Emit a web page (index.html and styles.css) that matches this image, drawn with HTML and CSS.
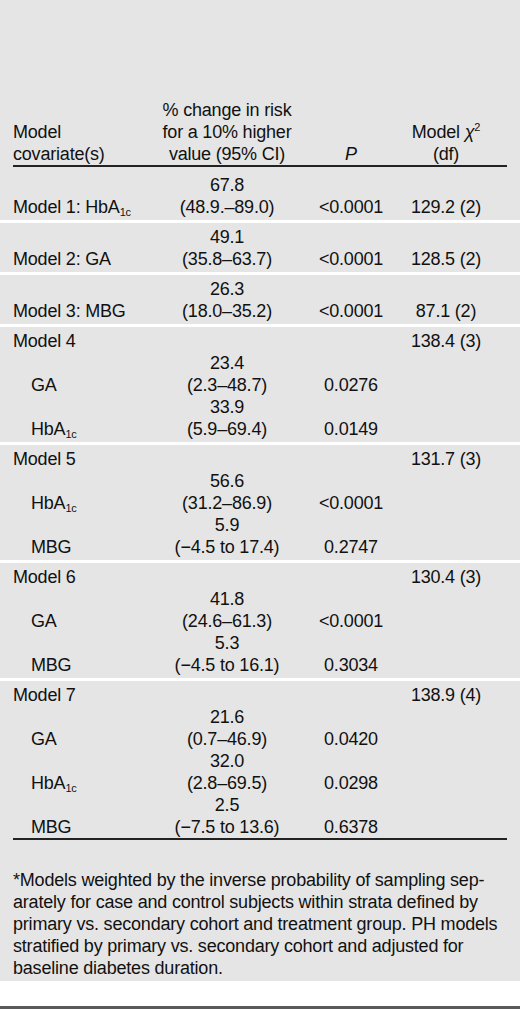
FILE: index.html
```html
<!DOCTYPE html>
<html lang="en">
<head>
  <meta charset="UTF-8" />
  <meta name="viewport" content="width=device-width, initial-scale=1.0"/>
  <title>Model covariates</title>
  <link rel="stylesheet" href="styles.css">
</head>
<body>

  <div class="panel">
    <!-- Column headings -->
    <div class="grid head">
      <div class="cell left">Model<br>covariate(s)</div>
      <div class="cell">% change in risk<br>for a 10% higher<br>value (95% CI)</div>
      <div class="cell"><em>P</em></div>
      <div class="cell">Model <span class="chi">χ</span><sup>2</sup><br>(df)</div>
    </div>

    <div class="grid group first">
      <div class="cell"></div><div class="cell">67.8</div><div class="cell"></div><div class="cell"></div>
      <div class="cell left">Model 1: HbA<sub>1c</sub></div><div class="cell">(48.9.–89.0)</div><div class="cell">&lt;0.0001</div><div class="cell">129.2 (2)</div>
    </div>

    <div class="grid group">
      <div class="cell"></div><div class="cell">49.1</div><div class="cell"></div><div class="cell"></div>
      <div class="cell left">Model 2: GA</div><div class="cell">(35.8–63.7)</div><div class="cell">&lt;0.0001</div><div class="cell">128.5 (2)</div>
    </div>

    <div class="grid group">
      <div class="cell"></div><div class="cell">26.3</div><div class="cell"></div><div class="cell"></div>
      <div class="cell left">Model 3: MBG</div><div class="cell">(18.0–35.2)</div><div class="cell">&lt;0.0001</div><div class="cell">87.1 (2)</div>
    </div>

    <div class="grid group">
      <div class="cell left">Model 4</div><div class="cell"></div><div class="cell"></div><div class="cell">138.4 (3)</div>
      <div class="cell"></div><div class="cell">23.4</div><div class="cell"></div><div class="cell"></div>
      <div class="cell sub">GA</div><div class="cell">(2.3–48.7)</div><div class="cell">0.0276</div><div class="cell"></div>
      <div class="cell"></div><div class="cell">33.9</div><div class="cell"></div><div class="cell"></div>
      <div class="cell sub">HbA<sub>1c</sub></div><div class="cell">(5.9–69.4)</div><div class="cell">0.0149</div><div class="cell"></div>
    </div>

    <div class="grid group">
      <div class="cell left">Model 5</div><div class="cell"></div><div class="cell"></div><div class="cell">131.7 (3)</div>
      <div class="cell"></div><div class="cell">56.6</div><div class="cell"></div><div class="cell"></div>
      <div class="cell sub">HbA<sub>1c</sub></div><div class="cell">(31.2–86.9)</div><div class="cell">&lt;0.0001</div><div class="cell"></div>
      <div class="cell"></div><div class="cell">5.9</div><div class="cell"></div><div class="cell"></div>
      <div class="cell sub">MBG</div><div class="cell">(−4.5 to 17.4)</div><div class="cell">0.2747</div><div class="cell"></div>
    </div>

    <div class="grid group">
      <div class="cell left">Model 6</div><div class="cell"></div><div class="cell"></div><div class="cell">130.4 (3)</div>
      <div class="cell"></div><div class="cell">41.8</div><div class="cell"></div><div class="cell"></div>
      <div class="cell sub">GA</div><div class="cell">(24.6–61.3)</div><div class="cell">&lt;0.0001</div><div class="cell"></div>
      <div class="cell"></div><div class="cell">5.3</div><div class="cell"></div><div class="cell"></div>
      <div class="cell sub">MBG</div><div class="cell">(−4.5 to 16.1)</div><div class="cell">0.3034</div><div class="cell"></div>
    </div>

    <div class="grid group last">
      <div class="cell left">Model 7</div><div class="cell"></div><div class="cell"></div><div class="cell">138.9 (4)</div>
      <div class="cell"></div><div class="cell">21.6</div><div class="cell"></div><div class="cell"></div>
      <div class="cell sub">GA</div><div class="cell">(0.7–46.9)</div><div class="cell">0.0420</div><div class="cell"></div>
      <div class="cell"></div><div class="cell">32.0</div><div class="cell"></div><div class="cell"></div>
      <div class="cell sub">HbA<sub>1c</sub></div><div class="cell">(2.8–69.5)</div><div class="cell">0.0298</div><div class="cell"></div>
      <div class="cell"></div><div class="cell">2.5</div><div class="cell"></div><div class="cell"></div>
      <div class="cell sub">MBG</div><div class="cell">(−7.5 to 13.6)</div><div class="cell">0.6378</div><div class="cell"></div>
    </div>

    <div class="rule"></div>

    <p class="note">
      <span>*Models weighted by the inverse probability of sampling sep-</span>
      <span>arately for case and control subjects within strata defined by</span>
      <span>primary vs. secondary cohort and treatment group. PH models</span>
      <span>stratified by primary vs. secondary cohort and adjusted for</span>
      <span>baseline diabetes duration.</span>
    </p>
  </div>

  <div class="page-end"></div>

</body>
</html>
```

FILE: styles.css
```css
* {
  box-sizing: border-box;
}

body {
  margin: 0;
  background: #fff;
  font-family: "Liberation Sans", Arial, sans-serif;
  font-size: 18px;
  letter-spacing: -0.2px;
  line-height: 22px;
  color: #111;
}

.panel {
  background: #e5e5e5;
  padding-top: 99px;
  padding-bottom: 2px;
}

.grid {
  display: grid;
  grid-template-columns: 124px 180px 68px 122px;
  padding: 0 13px;
}

.cell {
  text-align: center;
  white-space: nowrap;
  min-height: 22px;
}

.cell.left {
  text-align: left;
}

.cell.sub {
  text-align: left;
  padding-left: 18px;
}

.head {
  margin: 0 13px;
  padding: 0;
  align-items: end;
  border-bottom: 2px solid #222;
}

.head em {
  font-style: italic;
}

.chi {
  font-style: italic;
}

sup {
  font-size: 11px;
  line-height: 0;
  vertical-align: 7px;
}

sub {
  font-size: 11px;
  line-height: 0;
  vertical-align: -3px;
}

.group {
  padding-top: 3px;
  padding-bottom: 2px;
  border-top: 3px solid #fff;
}

.group.first {
  border-top: none;
  padding-top: 7px;
}

.group.last {
  padding-bottom: 0;
}

.rule {
  margin: 0 13px;
  border-top: 2px solid #222;
}

.note {
  margin: 29px 0 0;
  padding: 0 13px;
}

.note span {
  display: block;
  white-space: nowrap;
}

.page-end {
  margin-top: 25px;
  height: 5px;
  background: #5a5a5a;
}
```
